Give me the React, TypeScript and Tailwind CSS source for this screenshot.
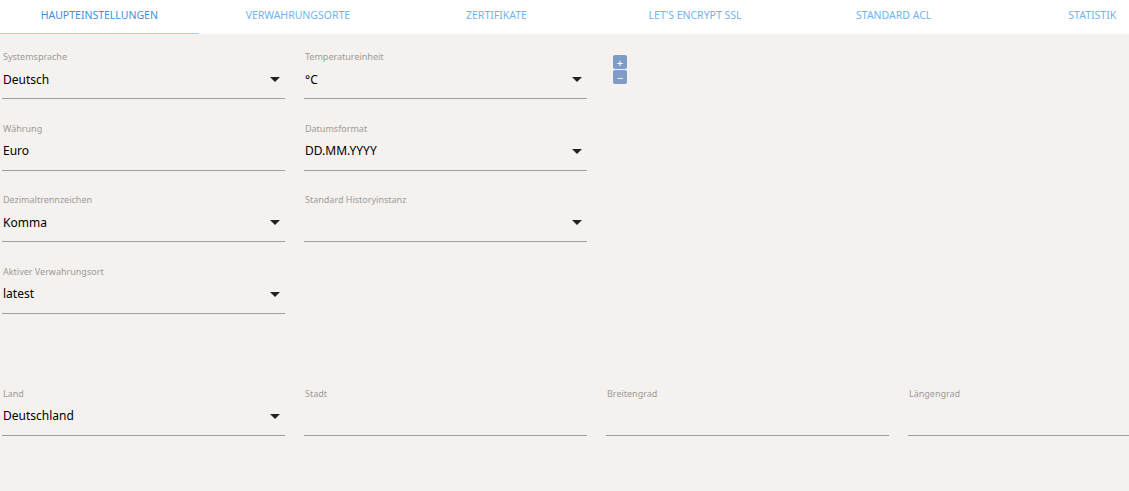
import React from "react";

const tabs = [
  "Haupteinstellungen",
  "Verwahrungsorte",
  "Zertifikate",
  "Let's Encrypt SSL",
  "Standard ACL",
  "Statistik",
];

function Caret() {
  return (
    <svg width="10" height="5" viewBox="0 0 10 5" className="shrink-0">
      <path d="M0 0 L10 0 L5 5 Z" fill="#222" />
    </svg>
  );
}

function Field({ label, value, select }: { label: string; value?: string; select?: boolean }) {
  return (
    <div className="border-b border-[#9e9e9e] pb-[4px]">
      <div className="h-[14px] pl-[1px] text-[9px] leading-[14px] text-[#9b9b9b]">{label}</div>
      <div className="flex h-[30px] items-center justify-between pl-[1px] pr-[5px] pt-[1px] text-[12px] text-black">
        <span>{value}</span>
        {select && <Caret />}
      </div>
    </div>
  );
}

export default function App() {
  return (
    <div className="h-[491px] w-[1129px] overflow-hidden bg-[#f5f1ee] font-['Noto_Sans','Open_Sans',sans-serif]">
      <div className="flex h-[34px] bg-white">
        {tabs.map((t, i) => (
          <div
            key={t}
            className={
              i === 0
                ? "w-[198.6px] shrink-0 border-b-[1.5px] border-[#a3d0f5] pt-[8px] text-center text-[10.5px] uppercase text-[#3d8fe0]"
                : "w-[198.6px] shrink-0 pt-[8px] text-center text-[10.5px] uppercase text-[#6fb4f2]"
            }
          >
            {t}
          </div>
        ))}
      </div>

      <div className="pl-[2px] pt-[16px]">
        <div className="flex items-start">
          <div className="grid grid-cols-[283px_283px] gap-x-[19px] gap-y-[22.5px]">
            <Field label="Systemsprache" value="Deutsch" select />
            <Field label="Temperatureinheit" value="°C" select />
            <Field label="Währung" value="Euro" />
            <Field label="Datumsformat" value="DD.MM.YYYY" select />
            <Field label="Dezimaltrennzeichen" value="Komma" select />
            <Field label="Standard Historyinstanz" select />
            <Field label="Aktiver Verwahrungsort" value="latest" select />
          </div>
          <div className="ml-[26px] mt-[5px] flex flex-col gap-[1px]">
            <button className="flex h-[14px] w-[14px] items-center justify-center rounded-[2px] bg-[#7f9cc6] text-[11px] leading-none text-white">
              +
            </button>
            <button className="flex h-[14px] w-[14px] items-center justify-center rounded-[2px] bg-[#7f9cc6] text-[11px] leading-none text-white">
              −
            </button>
          </div>
        </div>

        <div className="mt-[73px] grid grid-cols-[283px_283px_283px_283px] gap-x-[19px]">
          <Field label="Land" value="Deutschland" select />
          <Field label="Stadt" />
          <Field label="Breitengrad" />
          <Field label="Längengrad" />
        </div>
      </div>
    </div>
  );
}
